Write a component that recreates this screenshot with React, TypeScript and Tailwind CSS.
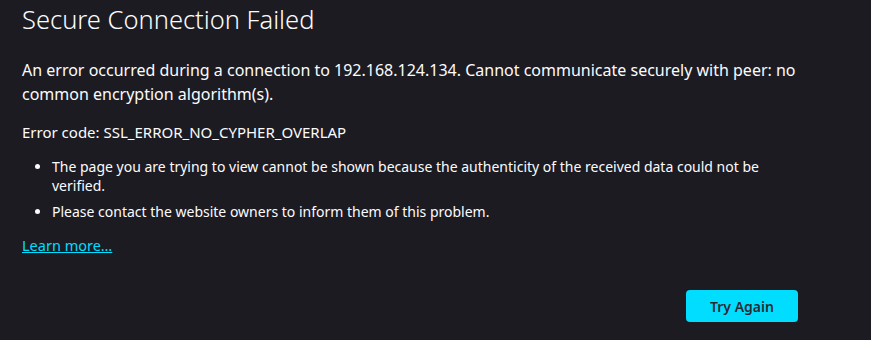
export default function App() {
  return (
    <div className="w-[871px] h-[340px] overflow-hidden bg-[#1c1b22] text-[#fbfbfe] font-['Noto_Sans',sans-serif]">
      <div className="pl-[22px] pr-[40px]">
        <h1 className="text-[25.5px] font-light leading-[40px] mt-[-1px]">Secure Connection Failed</h1>
        <p className="mt-[19px] text-[16px] leading-[24px] w-[790px]">
          An error occurred during a connection to 192.168.124.134. Cannot communicate securely with peer: no common encryption algorithm(s).
        </p>
        <p className="mt-[16px] text-[15px] leading-[20px]">Error code: SSL_ERROR_NO_CYPHER_OVERLAP</p>
        <ul className="mt-[15px] text-[14px] leading-[19px] list-disc pl-[30px] w-[790px]">
          <li>
            The page you are trying to view cannot be shown because the authenticity of the received data could not be verified.
          </li>
          <li className="mt-[7px]">Please contact the website owners to inform them of this problem.</li>
        </ul>
        <a href="#" className="block mt-[14px] text-[14.5px] leading-[20px] text-[#00ddff] underline w-fit">
          Learn more…
        </a>
        <div className="flex justify-end w-[776px] mt-[35px]">
          <button className="w-[112px] h-[32px] rounded-[4px] bg-[#00ddff] text-[#2b2a33] text-[14px] font-semibold">
            Try Again
          </button>
        </div>
      </div>
    </div>
  );
}
